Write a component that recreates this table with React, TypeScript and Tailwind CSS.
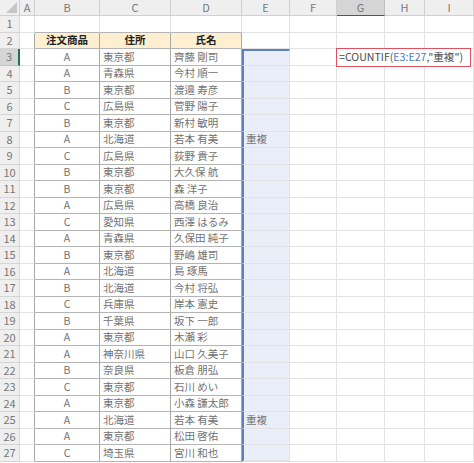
import React from 'react';

const COLS = ['A', 'B', 'C', 'D', 'E', 'F', 'G', 'H', 'I'];
const WIDTHS = ['w-[15px]', 'w-[65px]', 'w-[71px]', 'w-[71px]', 'w-[48px]', 'w-[47px]', 'w-[48px]', 'w-[40px]', 'w-[49px]'];

const ROWS: [string, string, string, string][] = [
  ['A', '東京都', '齊藤 剛司', ''],
  ['A', '青森県', '今村 順一', ''],
  ['B', '東京都', '渡邉 寿彦', ''],
  ['C', '広島県', '菅野 陽子', ''],
  ['B', '東京都', '新村 敏明', ''],
  ['A', '北海道', '若本 有美', '重複'],
  ['C', '広島県', '荻野 貴子', ''],
  ['B', '東京都', '大久保 航', ''],
  ['B', '東京都', '森 洋子', ''],
  ['A', '広島県', '高橋 良治', ''],
  ['C', '愛知県', '西澤 はるみ', ''],
  ['A', '青森県', '久保田 純子', ''],
  ['B', '東京都', '野嶋 雄司', ''],
  ['A', '北海道', '島 琢馬', ''],
  ['B', '北海道', '今村 将弘', ''],
  ['C', '兵庫県', '岸本 憲史', ''],
  ['B', '千葉県', '坂下 一郎', ''],
  ['A', '東京都', '木瀬 彩', ''],
  ['A', '神奈川県', '山口 久美子', ''],
  ['B', '奈良県', '板倉 朋弘', ''],
  ['C', '東京都', '石川 めい', ''],
  ['A', '東京都', '小森 謙太郎', ''],
  ['A', '北海道', '若本 有美', '重複'],
  ['A', '東京都', '松田 啓佑', ''],
  ['C', '埼玉県', '宮川 和也', ''],
];

function Formula() {
  return (
    <div className="absolute left-[-1px] top-[-1px] z-10 flex h-[19px] w-[135px] items-center border-[1.5px] border-[#e0505e] bg-white pl-[2px] text-[10.6px] whitespace-nowrap text-[#4a4a4a]">
      =COUNTIF(<span className="text-[#4a78c8]">E3:E27</span>,"重複")
    </div>
  );
}

function Cell({ row, col }: { row: number; col: number }) {
  // col: 0 = A ... 8 = I; row: 1..27
  const inTable = row >= 2 && col >= 1 && col <= 3;
  const rightDark = inTable || (col === 0 && row >= 2);
  const bottomDark = row >= 1 && row <= 27 && col >= 1 && col <= 3;
  const inRange = col === 4 && row >= 3;
  const data = row >= 3 ? ROWS[row - 3] : null;

  let text = '';
  if (row === 2 && col >= 1 && col <= 3) text = ['注文商品', '住所', '氏名'][col - 1];
  if (data && col >= 1 && col <= 3) text = data[col - 1];
  if (data && col === 4) text = data[3];

  return (
    <div
      className={`relative flex h-full shrink-0 items-center overflow-visible border-b border-r ${WIDTHS[col]} ${
        rightDark ? 'border-r-[#a8a8a8]' : 'border-r-[#e2e2e2]'
      } ${bottomDark ? 'border-b-[#b4b4b4]' : 'border-b-[#e2e2e2]'} ${
        row === 2 && inTable ? 'bg-[#fdefcf] font-bold text-[#222] justify-center' : ''
      } ${inRange ? 'bg-[#e9eef9] border-x-2 border-x-[#5f80c0]' : ''} ${
        inRange && row === 3 ? 'border-t-2 border-t-[#5f80c0]' : ''
      } ${inRange && row === 27 ? 'border-b-2 border-b-[#5f80c0]' : ''} ${
        row >= 3 && col === 1 ? 'justify-center' : ''
      } ${row >= 3 && (col === 2 || col === 3) ? 'pl-[3px]' : ''} ${row >= 3 && col === 4 ? 'pl-[2px]' : ''} ${
        row >= 3 ? 'text-[#727272]' : ''
      }`}
    >
      {text}
      {row === 3 && col === 6 && <Formula />}
    </div>
  );
}

export default function App() {
  return (
    <div
      className="h-[463px] w-[474px] overflow-hidden bg-white text-[10.5px] leading-none"
      style={{ fontFamily: '"Noto Sans CJK JP", "Noto Sans", sans-serif' }}
    >
      {/* column header */}
      <div className="flex h-[16px] bg-[#efefef] text-[11px] text-[#777]">
        <div className="relative h-full w-[20px] shrink-0 border-b border-r border-[#d0d0d0]">
          <svg className="absolute bottom-[2px] right-[2px]" width="11" height="11" viewBox="0 0 11 11">
            <polygon points="11,0 11,11 0,11" fill="#c6c6c6" />
          </svg>
        </div>
        {COLS.map((c, i) => (
          <div
            key={c}
            className={`flex h-full shrink-0 items-center justify-center border-r border-b ${WIDTHS[i]} ${
              c === 'G' ? 'bg-[#d5d5d5] border-r-[#c0c0c0] border-b-[#217346]' : 'border-[#d0d0d0]'
            }`}
          >
            {c}
          </div>
        ))}
      </div>
      {Array.from({ length: 27 }, (_, r) => r + 1).map((row) => (
        <div key={row} className="flex h-[16.5px]">
          <div
            className={`flex h-full w-[20px] shrink-0 items-center justify-center border-b border-r text-[11px] text-[#777] ${
              row === 3 ? 'bg-[#d5d5d5] border-b-[#c0c0c0] border-r-[#217346] border-r-2' : 'bg-[#efefef] border-[#d6d6d6]'
            }`}
          >
            {row}
          </div>
          {COLS.map((_, col) => (
            <Cell key={col} row={row} col={col} />
          ))}
        </div>
      ))}
    </div>
  );
}
